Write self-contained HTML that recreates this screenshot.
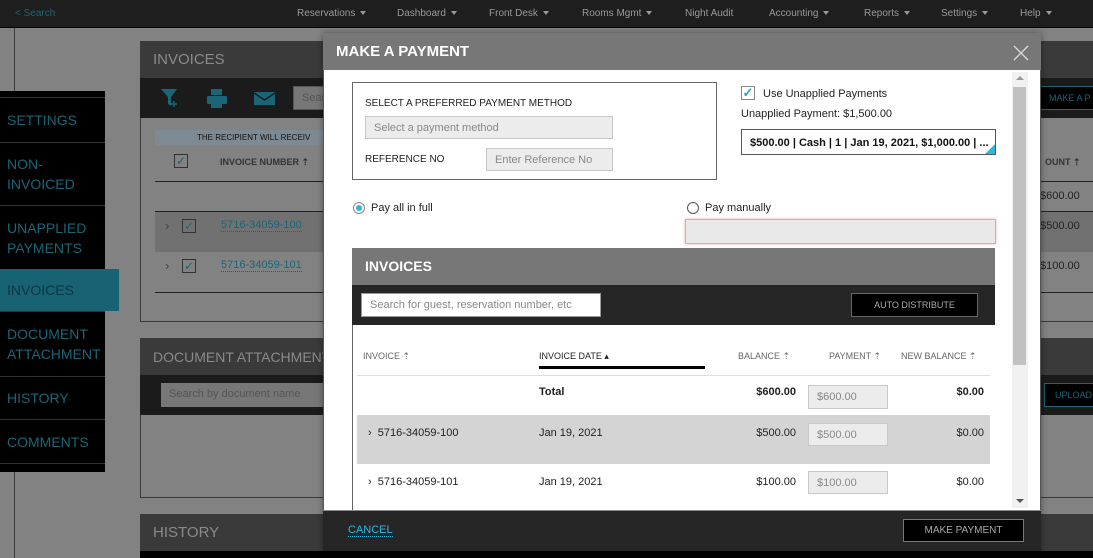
<!DOCTYPE html>
<html><head><style>
*{box-sizing:border-box;margin:0;padding:0}
body{width:1093px;height:558px;overflow:hidden;background:#828282;font-family:"Liberation Sans",sans-serif;position:relative}
.a{position:absolute}
.top{left:0;top:0;width:1093px;height:28px;background:#1e1e1e;border-bottom:1px solid #000}
.nav{top:8px;font-size:10px;color:#9a9a9a;white-space:nowrap}
.nav b{display:inline-block;border:3px solid transparent;border-top:4px solid #9a9a9a;margin-left:5px;vertical-align:-2px}
.side{left:0;width:105px;background:#000;border-top:1px solid #333;color:#1a6677;font-size:14px;padding:0 7px;display:flex;align-items:center;line-height:20px}
.ph{background:#3a3a3a;color:#8a8a8a;font-size:15px;padding-left:13px;display:flex;align-items:center}
.tb{background:#1b1b1b}
.mh{color:#fff;font-size:15px;font-weight:bold;padding-left:13px}
.t{font-size:11px;color:#222}
.inp{background:#ececec;border:1px solid #c8c8c8;font-size:11px;color:#888;padding-left:8px;display:flex;align-items:center}
.th{font-size:9px;color:#666;top:351px}
.num{font-size:11px;color:#222;text-align:right}
</style></head><body>
<div class="a top"></div>
<div class="a nav" style="left:15px;color:#1a6677">&lt; Search</div>
<div class="a nav" style="left:297px">Reservations<b></b></div>
<div class="a nav" style="left:397px">Dashboard<b></b></div>
<div class="a nav" style="left:489px">Front Desk<b></b></div>
<div class="a nav" style="left:582px">Rooms Mgmt<b></b></div>
<div class="a nav" style="left:685px">Night Audit</div>
<div class="a nav" style="left:769px">Accounting<b></b></div>
<div class="a nav" style="left:864px">Reports<b></b></div>
<div class="a nav" style="left:941px">Settings<b></b></div>
<div class="a nav" style="left:1020px">Help<b></b></div>
<div class="a" style="left:14px;top:28px;width:1px;height:530px;background:#3c3c3c"></div>

<div class="a" style="left:140px;top:41px;width:960px;height:281px;border:1px solid #3a3a3a"></div>
<div class="a ph" style="left:140px;top:41px;width:960px;height:37px">INVOICES</div>
<div class="a tb" style="left:140px;top:78px;width:960px;height:40px"></div>
<svg class="a" style="left:160px;top:87px" width="20" height="22"><path d="M1 2h16l-6 8v9l-3-2v-7z" fill="#1a6677"/><path d="M14 14v6M11 17h6" stroke="#1a6677" stroke-width="1.5"/></svg>
<svg class="a" style="left:206px;top:89px" width="22" height="20"><rect x="5" y="0" width="11" height="6" fill="#1a6677"/><rect x="1" y="7" width="20" height="8" rx="1" fill="#1a6677"/><rect x="5" y="13" width="11" height="6" fill="#1a6677"/></svg>
<svg class="a" style="left:254px;top:92px" width="22" height="14"><rect width="21" height="13" fill="#1a6677"/><path d="M0 1l10.5 7L21 1" stroke="#1b1b1b" stroke-width="1.5" fill="none"/></svg>
<div class="a" style="left:293px;top:86px;width:40px;height:24px;background:#777;border:1px solid #555;color:#555;font-size:11px;padding:5px 8px">Sear</div>
<div class="a" style="left:1040px;top:86px;width:60px;height:24px;border:1px solid #1a6677;color:#1a6677;font-size:9px;padding:6px 8px;white-space:nowrap;background:#000">MAKE A P</div>
<div class="a" style="left:155px;top:130px;width:170px;height:15px;background:#7d8a93;font-size:8px;color:#111;padding:3px 0 0 42px;white-space:nowrap">THE RECIPIENT WILL RECEIV</div>
<div class="a" style="left:174px;top:154px;width:14px;height:14px;border:1px solid #333;color:#1a6677;font-size:12px;line-height:12px;text-align:center">✓</div>
<div class="a" style="left:220px;top:157px;font-size:9px;color:#333;font-weight:bold">INVOICE NUMBER ⇡</div>
<div class="a" style="left:155px;top:181px;width:945px;height:1px;background:#222"></div>
<div class="a" style="left:155px;top:211px;width:945px;height:1px;background:#222"></div>
<div class="a" style="left:155px;top:212px;width:945px;height:40px;background:#717171"></div>
<div class="a" style="left:155px;top:292px;width:945px;height:1px;background:#222"></div>
<div class="a" style="left:165px;top:218px;color:#444;font-size:13px">›</div>
<div class="a" style="left:182px;top:219px;width:14px;height:14px;border:1px solid #333;color:#1a6677;font-size:12px;line-height:12px;text-align:center">✓</div>
<div class="a" style="left:221px;top:219px;font-size:11px;color:#1a6677;border-bottom:1px dotted #1a6677">5716-34059-100</div>
<div class="a" style="left:165px;top:258px;color:#444;font-size:13px">›</div>
<div class="a" style="left:182px;top:259px;width:14px;height:14px;border:1px solid #333;color:#1a6677;font-size:12px;line-height:12px;text-align:center">✓</div>
<div class="a" style="left:221px;top:259px;font-size:11px;color:#1a6677;border-bottom:1px dotted #1a6677">5716-34059-101</div>
<div class="a" style="left:1045px;top:157px;font-size:9px;color:#333;font-weight:bold">OUNT ⇡</div>
<div class="a" style="left:1040px;top:190px;font-size:11px;color:#222">$600.00</div>
<div class="a" style="left:1040px;top:220px;font-size:11px;color:#222">$500.00</div>
<div class="a" style="left:1040px;top:260px;font-size:11px;color:#222">$100.00</div>

<div class="a" style="left:140px;top:338px;width:960px;height:160px;border:1px solid #3a3a3a"></div>
<div class="a ph" style="left:140px;top:338px;width:960px;height:37px;font-size:14px">DOCUMENT ATTACHMENT</div>
<div class="a tb" style="left:140px;top:375px;width:960px;height:40px"></div>
<div class="a" style="left:161px;top:383px;width:170px;height:24px;background:#777;color:#555;font-size:11px;padding:5px 8px">Search by document name</div>
<div class="a" style="left:1044px;top:383px;width:60px;height:24px;border:1px solid #1a6677;color:#1a6677;font-size:9px;padding:6px 10px;background:#000">UPLOAD</div>
<div class="a ph" style="left:140px;top:514px;width:960px;height:37px">HISTORY</div>
<div class="a" style="left:140px;top:551px;width:960px;height:7px;background:#000"></div>

<div class="a" style="left:0;top:91px;width:105px;height:381px;background:#000"></div>
<div class="a side" style="top:97px;height:45px">SETTINGS</div>
<div class="a side" style="top:142px;height:63px">NON-<br>INVOICED</div>
<div class="a side" style="top:205px;height:64px">UNAPPLIED<br>PAYMENTS</div>
<div class="a side" style="top:269px;height:42px;width:119px;background:#176374;border:none;color:#0b3641">INVOICES</div>
<div class="a side" style="top:311px;height:65px">DOCUMENT<br>ATTACHMENT</div>
<div class="a side" style="top:376px;height:43px">HISTORY</div>
<div class="a side" style="top:419px;height:44px">COMMENTS</div>
<div class="a" style="left:0;top:463px;width:105px;height:1px;background:#333"></div>

<div class="a" style="left:323px;top:33px;width:718px;height:518px;background:#fff;border:1px solid #555;box-shadow:0 0 6px rgba(0,0,0,.4)"></div>
<div class="a mh" style="left:323px;top:33px;width:718px;height:37px;background:#777;line-height:37px">MAKE A PAYMENT</div>
<svg class="a" style="left:1013px;top:45px" width="16" height="16"><path d="M1 1l14 14M15 1L1 15" stroke="#ddd" stroke-width="1.3"/></svg>
<div class="a" style="left:1012px;top:72px;width:16px;height:436px;background:#f1f1f1"></div>
<div class="a" style="left:1013px;top:87px;width:13px;height:278px;background:#c1c1c1"></div>
<div class="a" style="left:1016px;top:76px;border:4px solid transparent;border-bottom:4px solid #999;border-top:0"></div>
<div class="a" style="left:1016px;top:499px;border:4px solid transparent;border-top:4px solid #555;border-bottom:0"></div>

<div class="a" style="left:352px;top:82px;width:365px;height:98px;border:1px solid #666"></div>
<div class="a t" style="left:365px;top:98px;font-size:10px">SELECT A PREFERRED PAYMENT METHOD</div>
<div class="a inp" style="left:365px;top:116px;width:248px;height:23px">Select a payment method</div>
<div class="a t" style="left:365px;top:154px;font-size:10px">REFERENCE NO</div>
<div class="a inp" style="left:486px;top:148px;width:127px;height:23px">Enter Reference No</div>

<div class="a" style="left:741px;top:86px;width:14px;height:14px;border:1px solid #888;color:#1aa6d0;font-size:13px;line-height:12px;text-align:center;font-weight:bold">✓</div>
<div class="a t" style="left:763px;top:88px">Use Unapplied Payments</div>
<div class="a t" style="left:741px;top:108px">Unapplied Payment: $1,500.00</div>
<div class="a" style="left:741px;top:129px;width:255px;height:26px;border:1px solid #555;font-size:11px;font-weight:bold;color:#111;padding:7px 0 0 8px;white-space:nowrap;overflow:hidden">$500.00 | Cash | 1 | Jan 19, 2021, $1,000.00 | ...</div>
<div class="a" style="left:985px;top:144px;width:0;height:0;border-left:10px solid transparent;border-bottom:10px solid #2bb8e0"></div>

<div class="a" style="left:353px;top:202px;width:12px;height:12px;border-radius:50%;border:1px solid #888;background:#fff"></div>
<div class="a" style="left:356px;top:205px;width:6px;height:6px;border-radius:50%;background:#2bb8e0"></div>
<div class="a t" style="left:371px;top:202px">Pay all in full</div>
<div class="a" style="left:687px;top:202px;width:12px;height:12px;border-radius:50%;border:1px solid #555"></div>
<div class="a t" style="left:705px;top:202px">Pay manually</div>
<div class="a" style="left:685px;top:219px;width:311px;height:25px;background:#e9e9e9;border:1px solid #f0a0a0;box-shadow:0 0 3px #f6b0b0"></div>

<div class="a mh" style="left:352px;top:248px;width:643px;height:37px;background:#777;line-height:37px;font-weight:bold;font-size:14px">INVOICES</div>
<div class="a" style="left:352px;top:285px;width:643px;height:40px;background:#262626"></div>
<div class="a" style="left:361px;top:293px;width:240px;height:24px;background:#fff;border:1px solid #999;font-size:11px;color:#888;padding:5px 8px">Search for guest, reservation number, etc</div>
<div class="a" style="left:851px;top:293px;width:127px;height:24px;background:#000;border:1px solid #666;color:#aaa;font-size:9px;text-align:center;line-height:22px">AUTO DISTRIBUTE</div>
<div class="a" style="left:352px;top:325px;width:1px;height:185px;background:#666"></div>

<div class="a th" style="left:363px">INVOICE ⇡</div>
<div class="a th" style="left:539px;color:#222">INVOICE DATE ▴</div>
<div class="a" style="left:539px;top:366px;width:166px;height:3px;background:#000"></div>
<div class="a th" style="left:738px">BALANCE ⇡</div>
<div class="a th" style="left:829px">PAYMENT ⇡</div>
<div class="a th" style="left:901px">NEW BALANCE ⇡</div>
<div class="a" style="left:357px;top:375px;width:633px;height:1px;background:#ddd"></div>

<div class="a t" style="left:539px;top:386px;font-weight:bold">Total</div>
<div class="a num" style="left:700px;top:386px;width:96px;font-weight:bold">$600.00</div>
<div class="a inp" style="left:808px;top:385px;width:80px;height:24px">$600.00</div>
<div class="a num" style="left:900px;top:386px;width:84px;font-weight:bold">$0.00</div>

<div class="a" style="left:357px;top:415px;width:633px;height:49px;background:#d4d4d4"></div>
<div class="a t" style="left:368px;top:427px">›&nbsp; 5716-34059-100</div>
<div class="a t" style="left:539px;top:427px">Jan 19, 2021</div>
<div class="a num" style="left:700px;top:427px;width:96px">$500.00</div>
<div class="a inp" style="left:808px;top:423px;width:80px;height:23px">$500.00</div>
<div class="a num" style="left:900px;top:427px;width:84px">$0.00</div>

<div class="a t" style="left:368px;top:476px">›&nbsp; 5716-34059-101</div>
<div class="a t" style="left:539px;top:476px">Jan 19, 2021</div>
<div class="a num" style="left:700px;top:476px;width:96px">$100.00</div>
<div class="a inp" style="left:808px;top:471px;width:80px;height:23px">$100.00</div>
<div class="a num" style="left:900px;top:476px;width:84px">$0.00</div>

<div class="a" style="left:323px;top:510px;width:718px;height:41px;background:#262626;border-top:1px solid #888"></div>
<div class="a" style="left:348px;top:524px;font-size:11px;color:#2bb8e0;border-bottom:1px dotted #2bb8e0">CANCEL</div>
<div class="a" style="left:903px;top:519px;width:121px;height:23px;background:#000;border:1px solid #777;color:#aaa;font-size:10px;text-align:center;line-height:21px">MAKE PAYMENT</div>
</body></html>
